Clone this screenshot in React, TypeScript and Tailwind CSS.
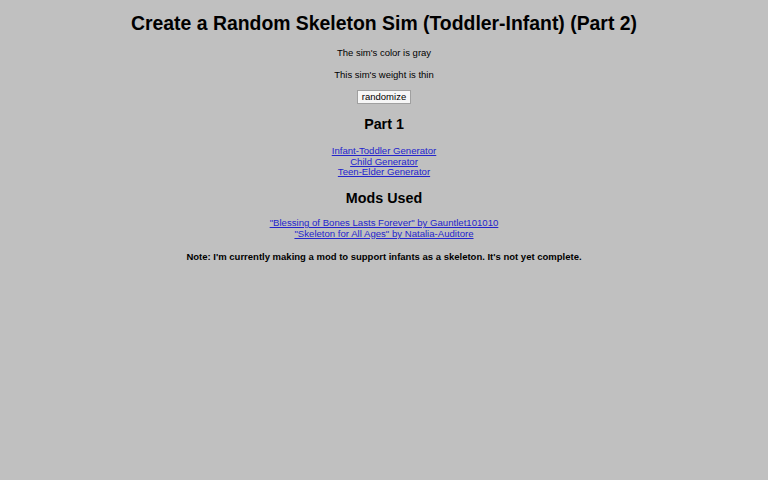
export default function App() {
  return (
    <div className="min-h-screen bg-[#c0c0c0] text-black font-['Liberation_Sans',Arial,sans-serif] text-center">
      <div className="pt-[11px] flex flex-col items-center">
        <h1 className="text-[19.4px] leading-[24px] font-bold">Create a Random Skeleton Sim (Toddler-Infant) (Part 2)</h1>
        <p className="mt-[12px] text-[9.5px] leading-[12px]">The sim's color is gray</p>
        <p className="mt-[10px] text-[9.5px] leading-[12px]">This sim's weight is thin</p>
        <button className="mt-[9px] bg-[#f6f6f6] border border-[#a0a0a0] w-[54px] h-[14px] text-[9.5px] leading-[12px] text-black">randomize</button>
        <h2 className="mt-[11px] text-[14.3px] leading-[18px] font-bold">Part 1</h2>
        <div className="mt-[13px] flex flex-col items-center text-[9.6px] leading-[10.7px]">
          <a href="#" className="text-[#2424cc] underline">Infant-Toddler Generator</a>
          <a href="#" className="text-[#2424cc] underline">Child Generator</a>
          <a href="#" className="text-[#2424cc] underline">Teen-Elder Generator</a>
        </div>
        <h2 className="mt-[11px] text-[14.3px] leading-[18px] font-bold">Mods Used</h2>
        <div className="mt-[11px] flex flex-col items-center text-[9.6px] leading-[10.7px]">
          <a href="#" className="text-[#2424cc] underline">"Blessing of Bones Lasts Forever" by Gauntlet101010</a>
          <a href="#" className="text-[#2424cc] underline">"Skeleton for All Ages" by Natalia-Auditore</a>
        </div>
        <p className="mt-[11px] text-[9.5px] leading-[12px] font-bold">Note: I'm currently making a mod to support infants as a skeleton. It's not yet complete.</p>
      </div>
    </div>
  );
}
